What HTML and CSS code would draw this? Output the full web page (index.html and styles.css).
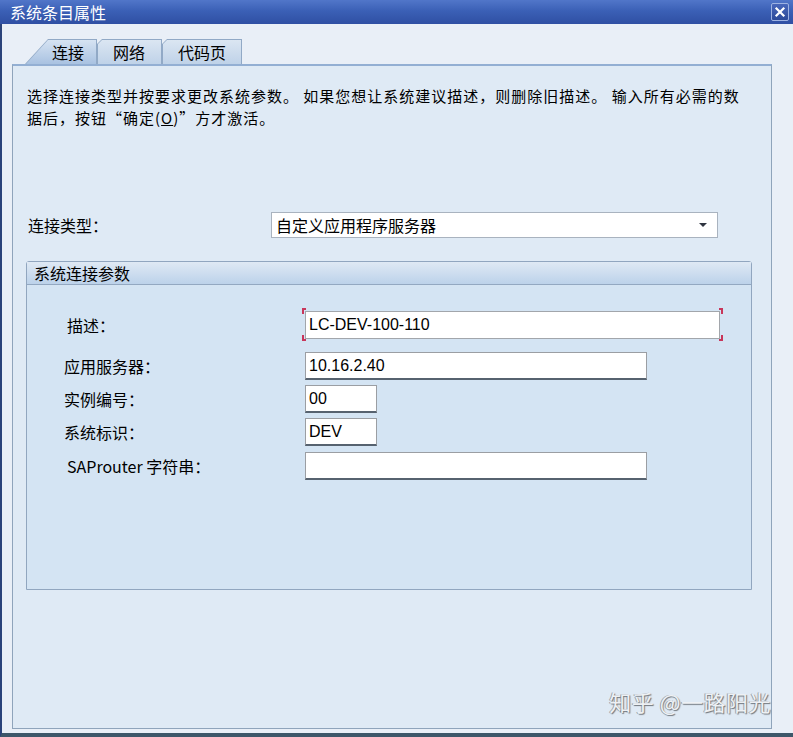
FILE: index.html
```html
<!DOCTYPE html>
<html>
<head>
    <title>系统条目属性</title>
    <link rel="stylesheet" href="styles.css">
</head>
<body>
    <div class="titlebar">
        <span class="title">系统条目属性</span>
        <div class="close-btn">
            <svg width="12" height="12" viewBox="0 0 12 12"><path d="M2.5 2.5 L9.5 9.5 M9.5 2.5 L2.5 9.5" stroke="#fff" stroke-width="2.2" stroke-linecap="square"/></svg>
        </div>
    </div>

    <div class="window">
        <div class="tabs">
            <div class="tab tab-first active"><span>连接</span></div>
            <div class="tab tab-second"><span>网络</span></div>
            <div class="tab tab-third"><span>代码页</span></div>
        </div>

        <div class="panel">
            <div class="intro">
                <div class="intro-line">选择连接类型并按要求更改系统参数。 如果您想让系统建议描述，则删除旧描述。 输入所有必需的数</div>
                <div class="intro-line">据后，按钮“确定(<u>O</u>)”方才激活。</div>
            </div>

            <div class="conn-row">
                <div class="conn-label">连接类型：</div>
                <div class="combo">
                    <span>自定义应用程序服务器</span>
                    <span class="combo-arrow"></span>
                </div>
            </div>

            <div class="group">
                <div class="group-head">系统连接参数</div>
                <div class="group-body">
                    <div class="field field-desc">
                        <div class="field-label indent">描述：</div>
                        <div class="focus-mark"><div class="input input-plain w-long">LC-DEV-100-110</div></div>
                    </div>
                    <div class="field field-app">
                        <div class="field-label">应用服务器：</div>
                        <div class="input w-mid">10.16.2.40</div>
                    </div>
                    <div class="field field-inst">
                        <div class="field-label">实例编号：</div>
                        <div class="input w-short">00</div>
                    </div>
                    <div class="field field-sys">
                        <div class="field-label">系统标识：</div>
                        <div class="input w-short">DEV</div>
                    </div>
                    <div class="field field-sap">
                        <div class="field-label indent">SAProuter 字符串：</div>
                        <div class="input w-mid"></div>
                    </div>
                </div>
            </div>

            <div class="watermark">知乎 @一路阳光</div>
        </div>
    </div>
</body>
</html>
```

FILE: styles.css
```css
body {
    margin: 0;
    width: 793px;
    height: 737px;
    overflow: hidden;
    background: #e9eff7;
    font-family: "Noto Sans CJK SC", "Liberation Sans", sans-serif;
    font-size: 16px;
    color: #000;
}
.titlebar {
    height: 24px;
    background: linear-gradient(#5176c9 0%, #3b60b6 45%, #2f4fa3 100%);
    display: flex;
    align-items: center;
    justify-content: space-between;
    padding: 0 4px 0 10px;
    box-sizing: border-box;
}
.title {
    color: #fff;
    font-size: 16px;
    line-height: 24px;
}
.close-btn {
    width: 16px;
    height: 16px;
    border: 1px solid #9db2e2;
    border-radius: 2px;
    background: linear-gradient(#4867bb, #2c4a99);
    display: flex;
    align-items: center;
    justify-content: center;
}
.window {
    height: 713px;
    box-sizing: border-box;
    border-left: 2px solid #2b437a;
    border-bottom: 4px solid #3d5769;
    padding: 15px 21px 4px 10px;
    display: flex;
    flex-direction: column;
}
.tabs {
    display: flex;
    height: 25px;
    padding-left: 13px;
}
.tab {
    position: relative;
    height: 25px;
    background: #91a9c6;
}
.tab span {
    position: absolute;
    left: 1px;
    right: 1px;
    top: 1px;
    bottom: 0;
    display: flex;
    align-items: center;
    background: linear-gradient(#dbe6f2, #bfd2e8);
    line-height: 20px;
}
.tab-first {
    width: 72px;
    clip-path: polygon(23px 0, 100% 0, 100% 100%, 0 100%);
    z-index: 2;
}
.tab-first span {
    clip-path: polygon(22px 0, 100% 0, 100% 100%, 0 100%);
    padding-left: 26px;
    background: linear-gradient(#d6e3f2, #a9c2e1);
}
.tab-second {
    width: 65px;
    clip-path: polygon(5px 0, 100% 0, 100% 100%, 0 100%, 0 5px);
}
.tab-second span {
    clip-path: polygon(4px 0, 100% 0, 100% 100%, 0 100%, 0 4px);
    padding-left: 15px;
}
.tab-third {
    width: 80px;
    clip-path: polygon(5px 0, 100% 0, 100% 100%, 0 100%, 0 5px);
}
.tab-third span {
    clip-path: polygon(4px 0, 100% 0, 100% 100%, 0 100%, 0 4px);
    padding-left: 15px;
}
.panel {
    position: relative;
    height: 665px;
    box-sizing: border-box;
    border: 1px solid #8fa4bb;
    border-top: 2px solid #93afd3;
    background: #dfeaf5;
}
.intro {
    padding: 19px 14px 0 14px;
    white-space: nowrap;
    font-size: 15px;
    letter-spacing: 1px;
}
.intro-line {
    height: 22px;
    line-height: 22px;
}
.conn-row {
    display: flex;
    align-items: center;
    margin-top: 83px;
    padding-left: 15px;
}
.conn-label {
    width: 243px;
}
.combo {
    width: 447px;
    height: 26px;
    box-sizing: border-box;
    border: 1px solid #a9b3bf;
    background: #fff;
    display: flex;
    align-items: center;
    justify-content: space-between;
    padding: 0 10px 0 4px;
}
.combo-arrow {
    width: 0;
    height: 0;
    border-left: 4px solid transparent;
    border-right: 4px solid transparent;
    border-top: 4px solid #2e3440;
}
.group {
    margin: 23px 0 0 13px;
    width: 726px;
    height: 329px;
    box-sizing: border-box;
    border: 1px solid #91a6bf;
    border-radius: 3px 3px 0 0;
    background: #d4e4f3;
}
.group-head {
    height: 22px;
    line-height: 22px;
    padding-left: 7px;
    border-bottom: 1px solid #93a8c1;
    background: linear-gradient(#dfe9f4, #bcd2ea);
}
.group-body {
    padding-left: 37px;
}
.field {
    display: flex;
    align-items: center;
}
.field-label {
    width: 241px;
}
.field-label.indent {
    width: 238px;
    padding-left: 3px;
}
.field-desc { margin-top: 26px; }
.field-app { margin-top: 13px; }
.field-inst { margin-top: 5px; }
.field-sys { margin-top: 5px; }
.field-sap { margin-top: 6px; }
.input {
    height: 28px;
    box-sizing: border-box;
    background: #fff;
    border: 1px solid #9b9ea3;
    border-bottom: 2px solid #56626f;
    font-family: "Liberation Sans", sans-serif;
    font-size: 16px;
    line-height: 25px;
    padding-left: 3px;
}
.input-plain {
    border: 1px solid #a2a6ab;
    line-height: 26px;
}
.w-long { width: 415px; }
.w-mid { width: 342px; }
.w-short { width: 72px; }
.focus-mark {
    position: relative;
}
.focus-mark::before {
    content: "";
    position: absolute;
    left: -3px;
    right: -3px;
    top: -3px;
    bottom: -2px;
    background:
        linear-gradient(#c8365a, #c8365a) left top / 2px 6px no-repeat,
        linear-gradient(#c8365a, #c8365a) left top / 4px 2px no-repeat,
        linear-gradient(#c8365a, #c8365a) left bottom / 2px 6px no-repeat,
        linear-gradient(#c8365a, #c8365a) left bottom / 4px 2px no-repeat,
        linear-gradient(#c8365a, #c8365a) right top / 2px 6px no-repeat,
        linear-gradient(#c8365a, #c8365a) right top / 4px 2px no-repeat,
        linear-gradient(#c8365a, #c8365a) right bottom / 2px 6px no-repeat,
        linear-gradient(#c8365a, #c8365a) right bottom / 4px 2px no-repeat;
}
.watermark {
    position: absolute;
    right: 0;
    bottom: 14px;
    font-size: 22px;
    line-height: 26px;
    color: #eef1f4;
    text-shadow: 1px 1px 1px #6f757c, -1px 0 0 #9aa2ab;
    letter-spacing: 0.5px;
}
```
